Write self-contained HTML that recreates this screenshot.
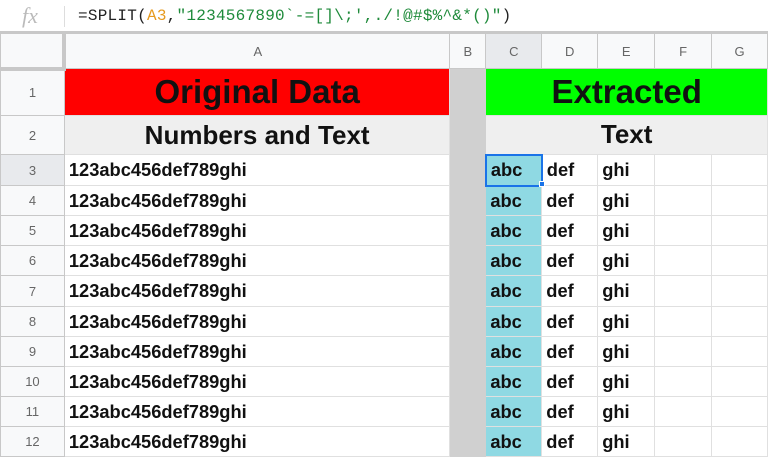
<!DOCTYPE html><html><head><style>
body{margin:0;width:768px;height:455px;overflow:hidden;background:#fff;font-family:"Liberation Sans",Arial,sans-serif;position:relative}
.a{position:absolute;box-sizing:border-box}
.fb{left:0;top:0;width:768px;height:33px;border-bottom:2px solid #c8c8c8;background:#fff}
.fx{left:22px;top:3px;font-family:"Liberation Serif",serif;font-style:italic;font-size:22px;color:#bbb}
.ft{left:78px;top:7px;font-family:"Liberation Mono",monospace;font-size:16px;color:#222;letter-spacing:0.25px}
table{position:absolute;left:0;top:33px;border-collapse:collapse;table-layout:fixed}
td{border:1px solid #e0e0e0;padding:0 0 0 4px;font-weight:bold;font-size:18.3px;color:#111;overflow:hidden;white-space:nowrap}
td.h{background:#f8f9fa;color:#666;font-weight:normal;font-size:13px;text-align:center;padding:0;border-color:#c8c8c8}
td.hs{background:#e8eaed}
td.b{background:#d0d0d0;border-color:#d0d0d0}
td.c{background:#8fd9e3}
</style></head><body>
<div class="a fb"></div>
<div class="a fx">fx</div>
<div class="a" style="left:64px;top:6px;width:1px;height:21px;background:#ddd"></div>
<div class="a ft">=SPLIT(<span style="color:#e69a1e">A3</span>,<span style="color:#1e8a3a">"1234567890`-=[]\;',./!@#$%^&amp;*()"</span>)</div>
<table>
<colgroup><col style="width:64px"><col style="width:386px"><col style="width:36px"><col style="width:56px"><col style="width:56px"><col style="width:57px"><col style="width:57px"><col style="width:56px"></colgroup>
<tr style="height:35px"><td class="h" style="border-right:4px solid #c8c8c8;border-bottom:4px solid #c8c8c8"></td><td class="h">A</td><td class="h">B</td><td class="h hs">C</td><td class="h">D</td><td class="h">E</td><td class="h">F</td><td class="h">G</td></tr>
<tr style="height:47px"><td class="h">1</td><td style="background:#f00;text-align:center;font-size:33px;padding:0">Original Data</td><td class="b"></td><td colspan="5" style="background:#0f0;text-align:center;font-size:33px;padding:0">Extracted</td></tr>
<tr style="height:39px"><td class="h">2</td><td style="background:#efefef;text-align:center;font-size:26px;padding:0">Numbers and Text</td><td class="b"></td><td colspan="5" style="background:#efefef;text-align:center;font-size:26px;padding:0">Text</td></tr>
<tr style="height:31px"><td class="h hs">3</td><td>123abc456def789ghi</td><td class="b"></td><td class="c" style="border:2px solid #1a73e8">abc</td><td>def</td><td>ghi</td><td></td><td></td></tr>
<tr style="height:30px"><td class="h">4</td><td>123abc456def789ghi</td><td class="b"></td><td class="c">abc</td><td>def</td><td>ghi</td><td></td><td></td></tr>
<tr style="height:30px"><td class="h">5</td><td>123abc456def789ghi</td><td class="b"></td><td class="c">abc</td><td>def</td><td>ghi</td><td></td><td></td></tr>
<tr style="height:30px"><td class="h">6</td><td>123abc456def789ghi</td><td class="b"></td><td class="c">abc</td><td>def</td><td>ghi</td><td></td><td></td></tr>
<tr style="height:31px"><td class="h">7</td><td>123abc456def789ghi</td><td class="b"></td><td class="c">abc</td><td>def</td><td>ghi</td><td></td><td></td></tr>
<tr style="height:30px"><td class="h">8</td><td>123abc456def789ghi</td><td class="b"></td><td class="c">abc</td><td>def</td><td>ghi</td><td></td><td></td></tr>
<tr style="height:30px"><td class="h">9</td><td>123abc456def789ghi</td><td class="b"></td><td class="c">abc</td><td>def</td><td>ghi</td><td></td><td></td></tr>
<tr style="height:30px"><td class="h">10</td><td>123abc456def789ghi</td><td class="b"></td><td class="c">abc</td><td>def</td><td>ghi</td><td></td><td></td></tr>
<tr style="height:30px"><td class="h">11</td><td>123abc456def789ghi</td><td class="b"></td><td class="c">abc</td><td>def</td><td>ghi</td><td></td><td></td></tr>
<tr style="height:30px"><td class="h">12</td><td>123abc456def789ghi</td><td class="b"></td><td class="c">abc</td><td>def</td><td>ghi</td><td></td><td></td></tr>
</table>
<div class="a" style="left:539px;top:181px;width:6px;height:6px;background:#1a73e8;border:1px solid #fff"></div>
</body></html>
